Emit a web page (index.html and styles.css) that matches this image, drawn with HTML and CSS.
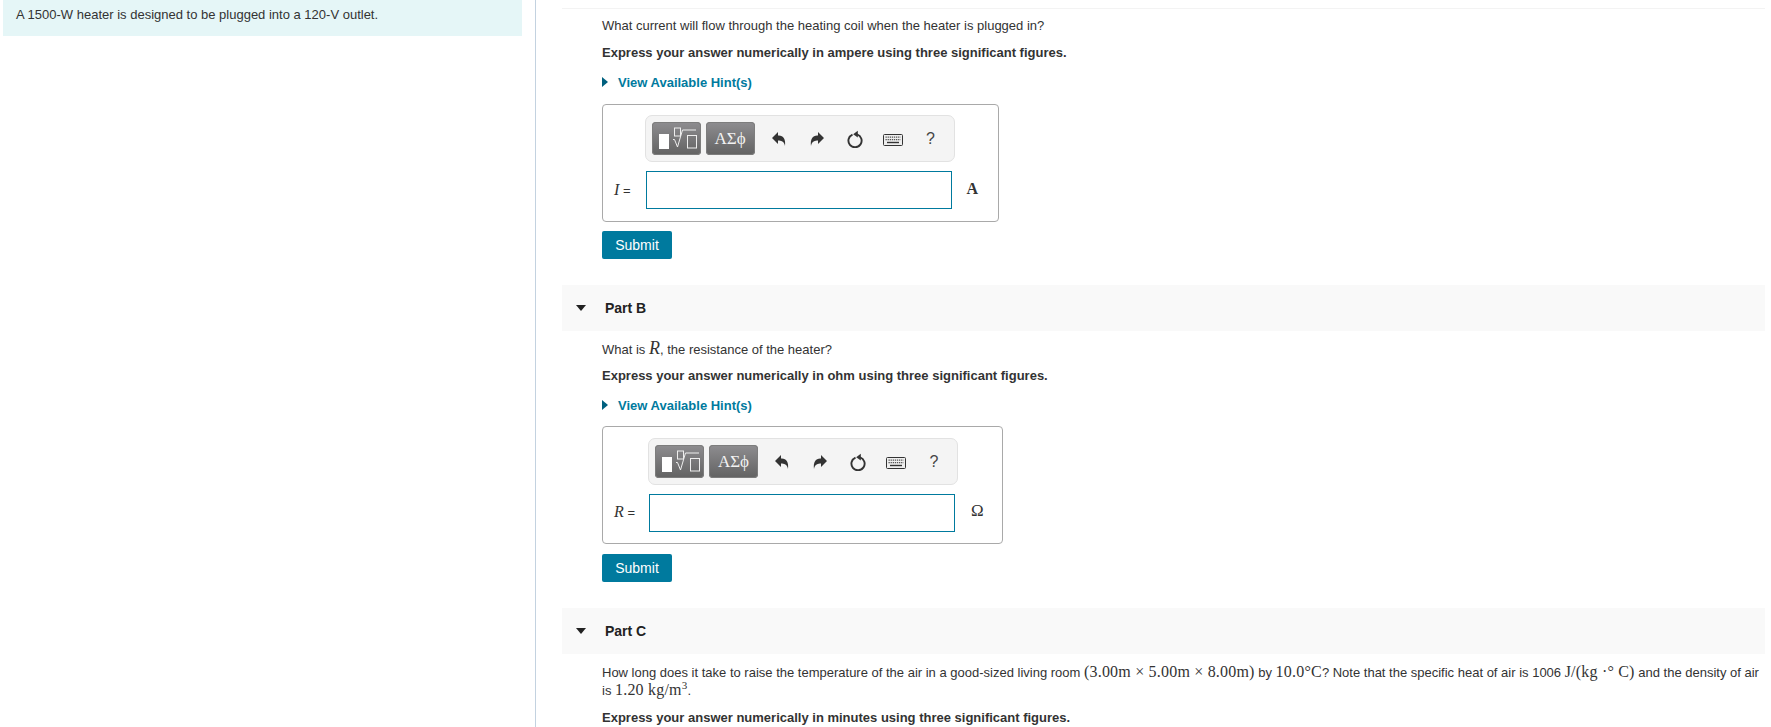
FILE: index.html
```html
<!DOCTYPE html>
<html lang="en">
<head>
<meta charset="utf-8">
<title>Heater problem</title>
<link rel="stylesheet" href="styles.css">
</head>
<body>
<div class="page">
  <aside class="intro">
    <div class="intro-box">A 1500-W heater is designed to be plugged into a 120-V outlet.</div>
  </aside>
  <main class="parts">
    <section class="part part-a">
      <div class="part-body">
        <p class="question">What current will flow through the heating coil when the heater is plugged in?</p>
        <p class="instruction">Express your answer numerically in ampere using three significant figures.</p>
        <div class="hint"><span class="hint-arrow"></span>View Available Hint(s)</div>
        <div class="answer">
          <div class="toolbar">
            <button class="tool-btn"><svg class="tpl" viewBox="0 0 49 33"><rect x="7" y="12" width="10" height="15" fill="#fff"/><rect x="22.5" y="6" width="6" height="8" fill="none" stroke="#eee"/><path d="M21 17.5h1.5l3 7.5 5-17H44" fill="none" stroke="#eee"/><rect x="35.5" y="13.5" width="9" height="12.5" fill="none" stroke="#eee"/></svg></button>
            <button class="tool-btn sym">ΑΣϕ</button>
            <span class="tool"><svg class="ico" viewBox="0 0 14 16"><path d="M0 7 6 1v3.5C11 4 14 8 13 15 12 10 9 9.5 6 9.5V13z" fill="#333"/></svg></span>
            <span class="tool"><svg class="ico" viewBox="0 0 14 16"><path d="M14 7 8 1v3.5C3 4 0 8 1 15 2 10 5 9.5 8 9.5V13z" fill="#333"/></svg></span>
            <span class="tool"><svg class="ico-reload" viewBox="0 0 18 18"><path d="M6.5 4.6A6.6 6.6 0 1 0 11 4.4" fill="none" stroke="#333" stroke-width="1.9"/><path d="M11.8 0.8v6.6l-4.6-3.2z" fill="#333"/></svg></span>
            <span class="tool"><svg class="ico-kbd" viewBox="0 0 20 12"><rect x=".5" y=".5" width="19" height="11" rx="1" fill="#eee" stroke="#333"/><path d="M2.5 3.2h15M2.5 5.6h15" stroke="#555" stroke-width="1.2" stroke-dasharray="1.3 .8"/><path d="M4 8.5h12" stroke="#333" stroke-width="1.4"/></svg></span>
            <span class="tool help">?</span>
          </div>
          <div class="var"><span class="mi">I</span> =</div>
          <div class="field"></div>
          <div class="unit">A</div>
        </div>
        <button class="submit">Submit</button>
      </div>
    </section>
    <section class="part part-b">
      <header class="part-head"><span class="caret"></span>Part B</header>
      <div class="part-body">
        <p class="question">What is <span class="mi big">R</span>, the resistance of the heater?</p>
        <p class="instruction">Express your answer numerically in ohm using three significant figures.</p>
        <div class="hint"><span class="hint-arrow"></span>View Available Hint(s)</div>
        <div class="answer">
          <div class="toolbar">
            <button class="tool-btn"><svg class="tpl" viewBox="0 0 49 33"><rect x="7" y="12" width="10" height="15" fill="#fff"/><rect x="22.5" y="6" width="6" height="8" fill="none" stroke="#eee"/><path d="M21 17.5h1.5l3 7.5 5-17H44" fill="none" stroke="#eee"/><rect x="35.5" y="13.5" width="9" height="12.5" fill="none" stroke="#eee"/></svg></button>
            <button class="tool-btn sym">ΑΣϕ</button>
            <span class="tool"><svg class="ico" viewBox="0 0 14 16"><path d="M0 7 6 1v3.5C11 4 14 8 13 15 12 10 9 9.5 6 9.5V13z" fill="#333"/></svg></span>
            <span class="tool"><svg class="ico" viewBox="0 0 14 16"><path d="M14 7 8 1v3.5C3 4 0 8 1 15 2 10 5 9.5 8 9.5V13z" fill="#333"/></svg></span>
            <span class="tool"><svg class="ico-reload" viewBox="0 0 18 18"><path d="M6.5 4.6A6.6 6.6 0 1 0 11 4.4" fill="none" stroke="#333" stroke-width="1.9"/><path d="M11.8 0.8v6.6l-4.6-3.2z" fill="#333"/></svg></span>
            <span class="tool"><svg class="ico-kbd" viewBox="0 0 20 12"><rect x=".5" y=".5" width="19" height="11" rx="1" fill="#eee" stroke="#333"/><path d="M2.5 3.2h15M2.5 5.6h15" stroke="#555" stroke-width="1.2" stroke-dasharray="1.3 .8"/><path d="M4 8.5h12" stroke="#333" stroke-width="1.4"/></svg></span>
            <span class="tool help">?</span>
          </div>
          <div class="var"><span class="mi">R</span> =</div>
          <div class="field"></div>
          <div class="unit">Ω</div>
        </div>
        <button class="submit">Submit</button>
      </div>
    </section>
    <section class="part part-c">
      <header class="part-head"><span class="caret"></span>Part C</header>
      <div class="part-body">
        <p class="question long">How long does it take to raise the temperature of the air in a good-sized living room <span class="math">(3.00m × 5.00m × 8.00m)</span> by <span class="math">10.0°C</span>? Note that the specific heat of air is 1006 <span class="math">J/(kg ·° C)</span> and the density of air is <span class="math">1.20 kg/m<sup>3</sup></span>.</p>
        <p class="instruction">Express your answer numerically in minutes using three significant figures.</p>
      </div>
    </section>
  </main>
</div>
</body>
</html>
```
FILE: styles.css
```css
html, body {
  margin: 0;
  height: 100%;
  overflow: hidden;
  background: #fff;
}
body {
  font-family: "Liberation Sans", Arial, sans-serif;
  font-size: 13px;
  color: #333;
}
.page {
  display: flex;
  align-items: stretch;
  height: 727px;
}
.intro {
  width: 536px;
  flex: none;
  box-sizing: border-box;
  padding-left: 3px;
  border-right: 1px solid #c3d2e0;
}
.intro-box {
  width: 519px;
  height: 36px;
  box-sizing: border-box;
  padding: 5px 0 0 13px;
  line-height: 20px;
  background: #e5f6f7;
}
.parts {
  flex: 1;
  min-width: 0;
  padding: 8px 6px 0 26px;
}
.part-a {
  border-top: 1px solid #f3f3f3;
}
.part-head {
  display: flex;
  align-items: center;
  height: 46px;
  background: #f9f9f9;
  font-size: 14px;
  font-weight: bold;
  color: #222;
}
.caret {
  width: 0;
  height: 0;
  margin: 0 19px 0 14px;
  border-left: 5px solid transparent;
  border-right: 5px solid transparent;
  border-top: 6px solid #222;
}
.part-body {
  padding-left: 40px;
}
.part-a .part-body { padding-top: 7px; }
.part-b .part-body { padding-top: 9px; }
.part-c .part-body { padding-top: 10px; }
.question {
  margin: 0;
  line-height: 20px;
}
.question.long {
  line-height: 18px;
}
.instruction {
  margin: 7px 0 0;
  line-height: 20px;
  font-weight: bold;
}
.part-b .instruction { margin-top: 6px; }
.part-c .instruction { margin-top: 8px; }
.mi {
  font-family: "Liberation Serif", serif;
  font-style: italic;
  font-size: 16px;
}
.mi.big {
  font-size: 18px;
  line-height: 0;
}
.math {
  font-family: "Liberation Serif", serif;
  font-size: 16px;
  letter-spacing: .2px;
  line-height: 0;
}
.math sup {
  font-size: 11px;
  line-height: 0;
}
.hint {
  display: flex;
  align-items: center;
  height: 20px;
  margin-top: 9px;
  color: #007a9e;
  font-weight: bold;
}
.hint-arrow {
  width: 0;
  height: 0;
  margin-right: 10px;
  border-top: 5px solid transparent;
  border-bottom: 5px solid transparent;
  border-left: 6px solid #00607e;
}
.answer {
  display: inline-grid;
  grid-template-columns: auto 306px auto;
  row-gap: 9px;
  align-items: center;
  margin-top: 12px;
  padding: 10px 20px 12px 11px;
  border: 1px solid #a9a9a9;
  border-radius: 4px;
  vertical-align: top;
}
.part-b .answer {
  margin-top: 11px;
  padding: 11px 18px 11px 11px;
}
.toolbar {
  grid-column: 2 / 4;
  display: flex;
  align-items: center;
  width: 310px;
  height: 47px;
  box-sizing: border-box;
  margin-left: -1px;
  padding-left: 6px;
  background: #f4f4f4;
  border: 1px solid #e2e2e2;
  border-radius: 7px;
}
.tool-btn {
  display: flex;
  align-items: center;
  justify-content: center;
  width: 49px;
  height: 33px;
  margin: 0 5px 0 0;
  padding: 0;
  border: 0;
  border-radius: 4px;
  box-shadow: inset 0 0 0 1px #7d7d7d;
  background: linear-gradient(#8e8d90, #626262);
  color: #f2f2f2;
}
.tpl {
  display: block;
  width: 49px;
  height: 33px;
}
.sym {
  font-family: "Liberation Serif", serif;
  font-size: 17px;
}
.tool {
  display: flex;
  align-items: center;
  justify-content: center;
  width: 38px;
  height: 33px;
}
.ico { width: 14px; height: 16px; }
.ico-reload { width: 18px; height: 18px; }
.ico-kbd { width: 20px; height: 12px; margin-top: 3px; }
.help {
  font-size: 16px;
  color: #444;
}
.var {
  padding-right: 15px;
  color: #333;
}
.part-b .var {
  padding: 0 14px 2px 0;
}
.field {
  height: 38px;
  box-sizing: border-box;
  border: 1px solid #007a9e;
  background: #fff;
}
.unit {
  padding: 0 0 2px 15px;
  font-family: "Liberation Serif", serif;
  font-size: 16px;
  font-weight: bold;
}
.part-b .unit {
  padding: 0 0 5px 16px;
  font-weight: normal;
  font-size: 17px;
}
.submit {
  display: block;
  width: 70px;
  height: 28px;
  margin: 9px 0 26px;
  padding: 0;
  border: 0;
  border-radius: 2px;
  background: #007a9e;
  color: #fff;
  font: 14px "Liberation Sans", Arial, sans-serif;
}
.part-b .submit { margin-top: 10px; }
```
